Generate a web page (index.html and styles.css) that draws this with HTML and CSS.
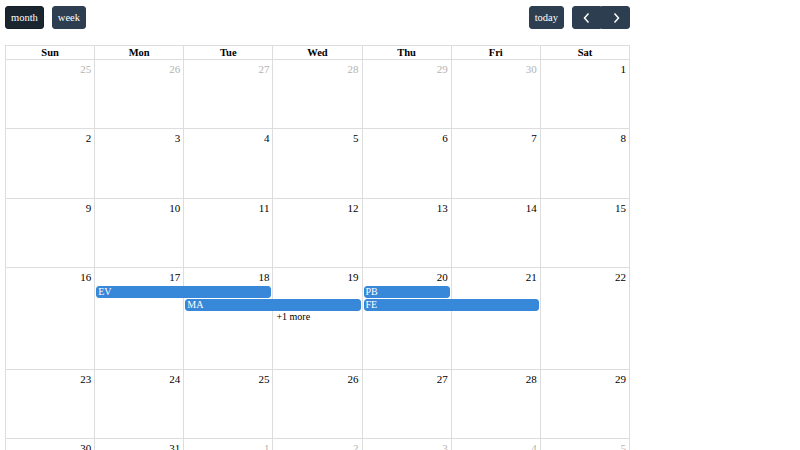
FILE: index.html
```html
<!DOCTYPE html>
<html>
<head>
<meta charset="utf-8">
<link rel="stylesheet" href="styles.css">
</head>
<body>
<div class="cal">
  <div class="toolbar">
    <div class="chunk">
      <button class="btn active">month</button>
      <button class="btn">week</button>
    </div>
    <div class="chunk">
      <button class="btn">today</button>
      <div class="group">
        <button class="btn icon" aria-label="prev"><svg width="10" height="12" viewBox="0 0 10 12"><polyline points="6.5,1.5 2.5,6 6.5,10.5" fill="none" stroke="#fff" stroke-width="1.5"/></svg></button>
        <button class="btn icon" aria-label="next"><svg width="10" height="12" viewBox="0 0 10 12"><polyline points="3.5,1.5 7.5,6 3.5,10.5" fill="none" stroke="#fff" stroke-width="1.5"/></svg></button>
      </div>
    </div>
  </div>

  <div class="grid">
    <div class="head">
      <div class="hcell">Sun</div><div class="hcell">Mon</div><div class="hcell">Tue</div><div class="hcell">Wed</div><div class="hcell">Thu</div><div class="hcell">Fri</div><div class="hcell">Sat</div>
    </div>

    <div class="week">
      <div class="bg c1"></div><div class="bg c2"></div><div class="bg c3"></div><div class="bg c4"></div><div class="bg c5"></div><div class="bg c6"></div><div class="bg c7"></div>
      <div class="num c1 other">25</div><div class="num c2 other">26</div><div class="num c3 other">27</div><div class="num c4 other">28</div><div class="num c5 other">29</div><div class="num c6 other">30</div><div class="num c7">1</div>
    </div>

    <div class="week">
      <div class="bg c1"></div><div class="bg c2"></div><div class="bg c3"></div><div class="bg c4"></div><div class="bg c5"></div><div class="bg c6"></div><div class="bg c7"></div>
      <div class="num c1">2</div><div class="num c2">3</div><div class="num c3">4</div><div class="num c4">5</div><div class="num c5">6</div><div class="num c6">7</div><div class="num c7">8</div>
    </div>

    <div class="week">
      <div class="bg c1"></div><div class="bg c2"></div><div class="bg c3"></div><div class="bg c4"></div><div class="bg c5"></div><div class="bg c6"></div><div class="bg c7"></div>
      <div class="num c1">9</div><div class="num c2">10</div><div class="num c3">11</div><div class="num c4">12</div><div class="num c5">13</div><div class="num c6">14</div><div class="num c7">15</div>
    </div>

    <div class="week tall">
      <div class="bg c1"></div><div class="bg c2"></div><div class="bg c3"></div><div class="bg c4"></div><div class="bg c5"></div><div class="bg c6"></div><div class="bg c7"></div>
      <div class="num c1">16</div><div class="num c2">17</div><div class="num c3">18</div><div class="num c4">19</div><div class="num c5">20</div><div class="num c6">21</div><div class="num c7">22</div>
      <div class="event r1 s2-3">EV</div>
      <div class="event r1 s5">PB</div>
      <div class="event r2 s3-4">MA</div>
      <div class="event r2 s5-6">FE</div>
      <div class="more c4">+1 more</div>
    </div>

    <div class="week">
      <div class="bg c1"></div><div class="bg c2"></div><div class="bg c3"></div><div class="bg c4"></div><div class="bg c5"></div><div class="bg c6"></div><div class="bg c7"></div>
      <div class="num c1">23</div><div class="num c2">24</div><div class="num c3">25</div><div class="num c4">26</div><div class="num c5">27</div><div class="num c6">28</div><div class="num c7">29</div>
    </div>

    <div class="week">
      <div class="bg c1"></div><div class="bg c2"></div><div class="bg c3"></div><div class="bg c4"></div><div class="bg c5"></div><div class="bg c6"></div><div class="bg c7"></div>
      <div class="num c1">30</div><div class="num c2">31</div><div class="num c3 other">1</div><div class="num c4 other">2</div><div class="num c5 other">3</div><div class="num c6 other">4</div><div class="num c7 other">5</div>
    </div>
  </div>
</div>
</body>
</html>
```

FILE: styles.css
```css
html, body {
  margin: 0;
  padding: 0;
  background: #fff;
}

body {
  font-family: "Liberation Serif", "Times New Roman", serif;
  font-size: 10px;
  color: #000;
}

.cal {
  width: 625px;
  margin: 6px 0 0 5px;
}

.toolbar {
  display: flex;
  justify-content: space-between;
  align-items: center;
  margin-bottom: 16px;
}

.chunk {
  display: flex;
  gap: 8px;
  align-items: center;
}

.btn {
  font-family: "Liberation Serif", "Times New Roman", serif;
  font-size: 10.5px;
  line-height: 15px;
  height: 23px;
  padding: 0 5px;
  border: 1px solid #2c3e50;
  border-radius: 3px;
  background: #2c3e50;
  color: #fff;
  box-sizing: border-box;
  margin: 0;
  display: flex;
  align-items: center;
}

.btn.active {
  background: #1a252f;
  border-color: #151e27;
}

.group {
  display: flex;
}

.btn.icon {
  width: 29px;
  justify-content: center;
  padding: 0;
}

.group .btn:first-child {
  border-radius: 3px 0 0 3px;
}

.group .btn:last-child {
  border-radius: 0 3px 3px 0;
}

.grid {
  border-top: 1px solid #ddd;
  border-left: 1px solid #ddd;
}

.head {
  display: grid;
  grid-template-columns: repeat(7, 1fr);
}

.hcell {
  font-weight: bold;
  font-size: 10.5px;
  text-align: center;
  line-height: 13px;
  border-right: 1px solid #ddd;
  border-bottom: 1px solid #ddd;
}

.week {
  display: grid;
  grid-template-columns: repeat(7, 1fr);
  grid-template-rows: 18px 13px 13px 13px 1fr;
  height: 69.333px;
}

.week.tall {
  height: 102px;
}

.bg {
  grid-row: 1 / -1;
  border-right: 1px solid #ddd;
  border-bottom: 1px solid #ddd;
}

.c1 { grid-column: 1; }
.c2 { grid-column: 2; }
.c3 { grid-column: 3; }
.c4 { grid-column: 4; }
.c5 { grid-column: 5; }
.c6 { grid-column: 6; }
.c7 { grid-column: 7; }

.num {
  grid-row: 1;
  text-align: right;
  font-size: 11px;
  line-height: 12px;
  padding: 3px 4px 3px 0;
}

.num.other {
  color: #b3b3b3;
}

.event {
  background: #3788d8;
  border: 1px solid #3788d8;
  border-radius: 3px;
  color: #fff;
  font-size: 10px;
  line-height: 10px;
  height: 12px;
  box-sizing: border-box;
  padding-left: 1px;
  margin: 0 2px 1px 1px;
  white-space: nowrap;
  overflow: hidden;
}

.r1 { grid-row: 2; }
.r2 { grid-row: 3; }
.s2-3 { grid-column: 2 / 4; }
.s5 { grid-column: 5; }
.s3-4 { grid-column: 3 / 5; }
.s5-6 { grid-column: 5 / 7; }

.more {
  grid-row: 4;
  font-size: 10px;
  line-height: 12px;
  margin-left: 3px;
  margin-top: -1px;
}
```
